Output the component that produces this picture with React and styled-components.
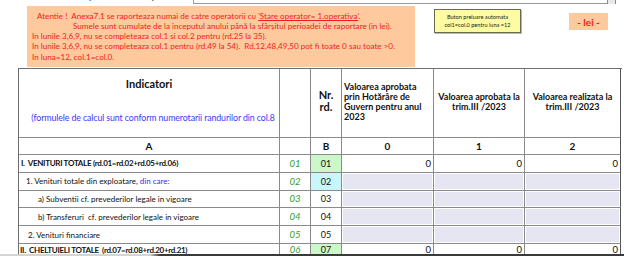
import React from 'react';
import styled, { createGlobalStyle } from 'styled-components';

const GlobalStyle = createGlobalStyle`
  html, body { margin: 0; padding: 0; background: #fff; }
  body { font-family: Lato, "Liberation Sans", sans-serif; }
`;

const Page = styled.div`
  position: relative;
  width: 624px;
  height: 256px;
  overflow: hidden;
  background: #fff;
`;

// strip of the sheet cut off by the top of the picture
const TopStrip = styled.div`
  display: flex;
  height: 4px;
  overflow: hidden;
`;

const CutText = styled.div`
  margin: -10px 0 0 30px;
  width: 163px;
  font-size: 9px;
  line-height: 11px;
  color: #222;
  white-space: nowrap;
`;

const FieldBox = styled.div`
  flex: 1;
  margin-right: 8px;
  border-left: 1px solid #9a9a9a;
  border-bottom: 1px solid #9a9a9a;
  position: relative;
  &::after {
    content: '';
    position: absolute;
    right: 0;
    top: -4px;
    width: 7px;
    height: 7px;
    border: 1px solid #8a8a8a;
    background: #e8e8e8;
  }
`;

const NoticeRow = styled.div`
  display: flex;
  align-items: flex-start;
  height: 62px;
  padding-top: 2px;
`;

const Notice = styled.div`
  margin-left: 27px;
  width: 388px;
  height: 61px;
  box-sizing: border-box;
  padding: 5px 0 0 5px;
  background: #fdc99d;
  color: #f21d1d;
  font-size: 8.1px;
  line-height: 10px;
  white-space: nowrap;
`;

const NoticeLine = styled.div`
  padding-left: ${(p) => p.$indent || 0}px;
  margin-top: ${(p) => p.$gap || 0}px;
`;

const Underlined = styled.span`
  text-decoration: underline;
`;

const AutoButton = styled.div`
  margin: 3px 0 0 19px;
  width: 87px;
  height: 24px;
  box-sizing: border-box;
  background: #fdfca2;
  border: 1px solid #6a6a52;
  box-shadow: 1px 1px 0 #b8b8a8;
  display: flex;
  flex-direction: column;
  align-items: center;
  justify-content: center;
  font-size: 5.6px;
  line-height: 8px;
  color: #222;
`;

const LeiBox = styled.div`
  margin: 7px 0 0 48px;
  width: 39px;
  height: 17px;
  background: #fdc99d;
  color: #f21d1d;
  font-weight: 700;
  font-size: 10px;
  display: flex;
  align-items: center;
  justify-content: center;
`;

const Grid = styled.div`
  margin-left: 18px;
  width: 603px;
  display: grid;
  grid-template-columns: 261px 31px 31px 92px 91px 96px;
  grid-template-rows: 69px 17px repeat(6, 17.8px);
  border-left: 1px solid #6e6e6e;
  border-top: 1px solid #6e6e6e;
  font-size: 8px;
  color: #111;
`;

const Cell = styled.div`
  box-sizing: border-box;
  border-right: 1px solid ${(p) => (p.$last ? '#555' : '#8a8a8a')};
  border-bottom: 1px solid #8a8a8a;
  background: ${(p) => p.$bg || '#fff'};
  box-shadow: ${(p) => (p.$shade ? 'inset 0 0 0 1px #fff' : 'none')};
  display: flex;
  align-items: ${(p) => (p.$top ? 'flex-start' : 'center')};
  justify-content: ${(p) => p.$justify || 'center'};
  padding: ${(p) => p.$pad || '0'};
  font-size: ${(p) => p.$size || 8}px;
  font-weight: ${(p) => (p.$bold ? 700 : 400)};
  font-style: ${(p) => (p.$italic ? 'italic' : 'normal')};
  letter-spacing: ${(p) => (p.$tight ? '-0.3px' : 'normal')};
  color: ${(p) => p.$color || '#111'};
  white-space: pre;
  overflow: hidden;
`;

const HeadMain = styled(Cell)`
  flex-direction: column;
  justify-content: flex-start;
`;

const HeadTitle = styled.div`
  margin-top: 8px;
  font-size: 11px;
  font-weight: 700;
`;

const HeadNote = styled.div`
  margin-top: 22px;
  padding-left: 8px;
  font-size: 8.8px;
  letter-spacing: -0.1px;
  color: #3b3bf4;
`;

const HeadCol = styled(Cell)`
  flex-direction: column;
  align-items: ${(p) => (p.$left ? 'flex-start' : 'center')};
  text-align: ${(p) => (p.$left ? 'left' : 'center')};
  padding: ${(p) => (p.$left ? '0 0 2px 2px' : '0 0 2px 0')};
  font-weight: 700;
  font-size: 9px;
  line-height: 10px;
`;

const NrHead = styled(HeadCol)`
  font-size: 11px;
  line-height: 12px;
  padding-bottom: 4px;
`;

const Blue = styled.span`
  color: #2c2cf0;
`;

const ScreenEdge = styled.div`
  position: absolute;
  left: 0;
  right: 0;
  bottom: 0;
  height: 2px;
  background: linear-gradient(to right, #d4d4d4 0, #d4d4d4 150px, #3a3a3a 160px, #3a3a3a 100%);
`;

const rows = [
  { label: 'I.  VENITURI TOTALE (rd.01=rd.02+rd.05+rd.06)', bold: true, pad: 2, code: '01', nr: '01', nrBg: '#ccf7c8', values: true },
  { label: '1. Venituri totale din exploatare, ', extra: 'din care:', pad: 7, code: '02', nr: '02', nrBg: '#c8f6fb' },
  { label: 'a) Subventii cf. prevederilor legale in vigoare', pad: 19, code: '03', nr: '03' },
  { label: 'b) Transferuri  cf. prevederilor legale in vigoare', pad: 19, code: '04', nr: '04' },
  { label: '2. Venituri financiare', pad: 9, code: '05', nr: '05' },
  { label: 'II.  CHELTUIELI TOTALE  (rd.07=rd.08+rd.20+rd.21)', bold: true, pad: 1, code: '06', nr: '07', nrBg: '#ccf7c8', values: true, top: true }
];

const App = () => {
  return (
    <Page>
      <GlobalStyle />
      <TopStrip>
        <CutText>Nr. de salariati pentru care se aprobă</CutText>
        <FieldBox />
      </TopStrip>

      <NoticeRow>
        <Notice>
          <NoticeLine $indent={5}>
            Atentie !&nbsp; Anexa7.1 se raporteaza numai de catre operatorii cu{' '}
            <Underlined>'Stare operator= 1.operativa'</Underlined>.
          </NoticeLine>
          <NoticeLine $indent={41}>
            Sumele sunt cumulate de la inceputul anului până la sfârșitul perioadei de raportare (in lei).
          </NoticeLine>
          <NoticeLine>In lunile 3,6,9, nu se completeaza col.1 si col.2 pentru (rd.25 la 35).</NoticeLine>
          <NoticeLine>
            In lunile 3,6,9, nu se completeaza col.1 pentru (rd.49 la 54).&nbsp; Rd.12,48,49,50 pot fi toate 0 sau toate &gt;0.
          </NoticeLine>
          <NoticeLine $gap={1}>In luna=12, col.1=col.0.</NoticeLine>
        </Notice>
        <AutoButton>
          <div>Buton preluare automata</div>
          <div>col1=col.0 pentru luna =12</div>
        </AutoButton>
        <LeiBox>- lei -</LeiBox>
      </NoticeRow>

      <Grid>
        {/* header */}
        <HeadMain>
          <HeadTitle>Indicatori</HeadTitle>
          <HeadNote>(formulele de calcul sunt conform numerotarii randurilor din col.8</HeadNote>
        </HeadMain>
        <Cell />
        <NrHead>
          <div>Nr.</div>
          <div>rd.</div>
        </NrHead>
        <HeadCol $left>
          <div>Valoarea aprobata</div>
          <div>prin Hotărâre de</div>
          <div>Guvern pentru anul</div>
          <div>2023</div>
        </HeadCol>
        <HeadCol>
          <div>Valoarea aprobata la</div>
          <div>trim.III /2023</div>
        </HeadCol>
        <HeadCol $last>
          <div>Valoarea realizata la</div>
          <div>trim.III /2023</div>
        </HeadCol>

        {/* column letters */}
        <Cell $bold $size={10}>A</Cell>
        <Cell />
        <Cell $bold $size={10}>B</Cell>
        <Cell $bold $size={10}>0</Cell>
        <Cell $bold $size={10}>1</Cell>
        <Cell $bold $last $size={10}>2</Cell>

        {rows.map((r) => (
          <React.Fragment key={r.code}>
            <Cell $justify="flex-start" $pad={`${r.top ? 1 : 0}px 0 0 ${r.pad}px`} $bold={r.bold} $tight={r.bold} $top={r.top}>
              <span>
                {r.label}
                {r.extra && <Blue>{r.extra}</Blue>}
              </span>
            </Cell>
            <Cell $italic $color="#2f9e2f" $size={9.5} $top={r.top}>
              {r.code}
            </Cell>
            <Cell $bg={r.nrBg} $size={9} $top={r.top}>
              {r.nr}
            </Cell>
            {[0, 1, 2].map((c) =>
              r.values ? (
                <Cell key={c} $last={c === 2} $justify="flex-end" $size={9.5} $top={r.top} $pad="0 2px 0 0">
                  0
                </Cell>
              ) : (
                <Cell key={c} $last={c === 2} $bg="#e6e6f2" $shade />
              )
            )}
          </React.Fragment>
        ))}
      </Grid>
      <ScreenEdge />
    </Page>
  );
};

export default App;
